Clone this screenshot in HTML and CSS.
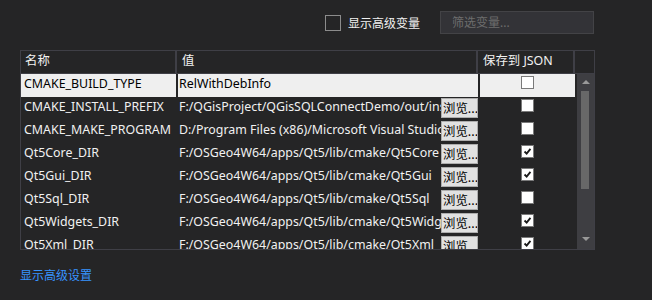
FILE: index.html
```html
<!DOCTYPE html>
<html lang="zh-CN">
<head>
    <meta charset="UTF-8">
    <meta name="viewport" content="width=device-width, initial-scale=1.0">
    <title>CMake 设置</title>
    <link rel="stylesheet" href="styles.css">
</head>
<body>
    <div class="page">
        <div class="toolbar">
            <label class="adv-toggle"><span class="box"></span>显示高级变量</label>
            <div class="filter">筛选变量...</div>
        </div>

        <div class="grid">
            <div class="head">
                <div class="hcell">名称</div>
                <div class="hcell">值</div>
                <div class="hcell">保存到 JSON</div>
                <div class="hcell corner"></div>
            </div>
            <div class="body">
                <div class="rows">
                    <div class="row selected">
                        <div class="name">CMAKE_BUILD_TYPE</div>
                        <div class="value"><span class="text">RelWithDebInfo</span></div>
                        <div class="save"><span class="check"></span></div>
                    </div>
                    <div class="row">
                        <div class="name">CMAKE_INSTALL_PREFIX</div>
                        <div class="value"><span class="text">F:/QGisProject/QGisSQLConnectDemo/out/install/x64-RelWithDebInfo</span><button class="browse">浏览...</button></div>
                        <div class="save"><span class="check"></span></div>
                    </div>
                    <div class="row">
                        <div class="name">CMAKE_MAKE_PROGRAM</div>
                        <div class="value"><span class="text">D:/Program Files (x86)/Microsoft Visual Studio/2019/Community</span><button class="browse">浏览...</button></div>
                        <div class="save"><span class="check"></span></div>
                    </div>
                    <div class="row">
                        <div class="name">Qt5Core_DIR</div>
                        <div class="value"><span class="text">F:/OSGeo4W64/apps/Qt5/lib/cmake/Qt5Core</span><button class="browse">浏览...</button></div>
                        <div class="save"><span class="check on"><svg viewBox="0 0 13 13"><polyline points="3,6.5 5.5,9 10,3.5"/></svg></span></div>
                    </div>
                    <div class="row">
                        <div class="name">Qt5Gui_DIR</div>
                        <div class="value"><span class="text">F:/OSGeo4W64/apps/Qt5/lib/cmake/Qt5Gui</span><button class="browse">浏览...</button></div>
                        <div class="save"><span class="check on"><svg viewBox="0 0 13 13"><polyline points="3,6.5 5.5,9 10,3.5"/></svg></span></div>
                    </div>
                    <div class="row">
                        <div class="name">Qt5Sql_DIR</div>
                        <div class="value"><span class="text">F:/OSGeo4W64/apps/Qt5/lib/cmake/Qt5Sql</span><button class="browse">浏览...</button></div>
                        <div class="save"><span class="check"></span></div>
                    </div>
                    <div class="row">
                        <div class="name">Qt5Widgets_DIR</div>
                        <div class="value"><span class="text">F:/OSGeo4W64/apps/Qt5/lib/cmake/Qt5Widgets</span><button class="browse">浏览...</button></div>
                        <div class="save"><span class="check on"><svg viewBox="0 0 13 13"><polyline points="3,6.5 5.5,9 10,3.5"/></svg></span></div>
                    </div>
                    <div class="row">
                        <div class="name">Qt5Xml_DIR</div>
                        <div class="value"><span class="text">F:/OSGeo4W64/apps/Qt5/lib/cmake/Qt5Xml</span><button class="browse">浏览...</button></div>
                        <div class="save"><span class="check on"><svg viewBox="0 0 13 13"><polyline points="3,6.5 5.5,9 10,3.5"/></svg></span></div>
                    </div>
                </div>
                <div class="scrollbar">
                    <span class="arrow up"></span>
                    <div class="thumb"></div>
                    <span class="arrow down"></span>
                </div>
            </div>
        </div>

        <a class="more" href="#">显示高级设置</a>
    </div>
</body>
</html>
```

FILE: styles.css
```css
html, body { margin: 0; padding: 0; background: #252526; }
body { font-family: "Noto Sans", "Noto Sans CJK SC", sans-serif; font-size: 12.4px; color: #f1f1f1; }

.page { width: 575px; padding: 11px 0 0 20px; }

/* top bar */
.toolbar { display: flex; justify-content: flex-end; align-items: center; height: 23px; font-size: 12px; }
.adv-toggle { display: flex; align-items: center; margin-right: 20px; }
.adv-toggle .box { width: 14px; height: 14px; border: 1px solid #8c8c8c; margin-right: 7px; }
.filter { width: 141px; height: 21px; line-height: 21px; padding-left: 11px; margin-right: 1px; background: #333337; border: 1px solid #434346; color: #6d6d6d; }

/* grid */
.grid { margin-top: 16px; border: 1px solid #3f3f46; height: 198px; overflow: hidden; }
.head { display: grid; grid-template-columns: 156px 301px 97px 1fr; height: 22px; border-bottom: 1px solid #3f3f46; }
.hcell { border-right: 2px solid #3f3f46; line-height: 20px; padding-left: 4px; white-space: nowrap; }
.hcell:nth-child(2), .hcell:nth-child(3) { padding-left: 5px; }
.hcell.corner { border-right: none; }

.body { display: flex; height: 175px; }
.rows { width: 556px; overflow: hidden; }
.row { display: grid; grid-template-columns: 155px 300px 95px; column-gap: 2px; height: 23px; line-height: 19px; }
.row > div { overflow: hidden; white-space: nowrap; }
.row .name { padding-left: 3px; }
.row .value { position: relative; padding-left: 1px; }
.row .value .text { display: block; overflow: hidden; }
.row .value:has(.browse) .text { width: 262px; }
.row.selected > div { background: #efefef; color: #000; }

.browse { position: absolute; top: 1px; right: 0; width: 37px; height: 20px; padding: 0 0 0 1px; margin: 0;
    background: #e1e1e1; border: 1px solid #adadad; font: 12.4px "Noto Sans CJK SC", sans-serif; color: #000;
    text-align: left; line-height: 16px; overflow: hidden; white-space: nowrap; }

.save { display: flex; justify-content: center; padding-top: 2px; box-sizing: border-box; }
.check { width: 13px; height: 13px; box-sizing: border-box; background: #fff; border: 1px solid #7a7a7a; }
.check svg { display: block; width: 11px; height: 11px; fill: none; stroke: #1a1a1a; stroke-width: 2.2; }

.scrollbar { position: relative; flex: 1; background: #3e3e42; }
.thumb { position: absolute; left: 4px; right: 5px; top: 17px; height: 98px; background: #686868; }
.arrow { position: absolute; left: 5px; width: 0; height: 0; border-left: 4px solid transparent; border-right: 4px solid transparent; }
.arrow.up { top: 6px; border-bottom: 4px solid #999; }
.arrow.down { bottom: 8px; border-top: 4px solid #999; }

.more { display: inline-block; margin-top: 16px; color: #3794ff; text-decoration: none; font-family: "Noto Sans CJK SC", sans-serif; font-size: 12px; }
```
